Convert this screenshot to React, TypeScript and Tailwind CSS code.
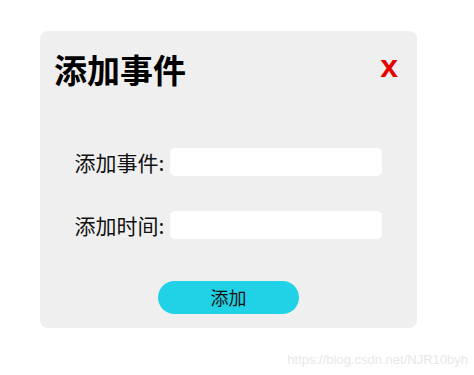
import React from "react";

const cjk = '"Noto Sans CJK SC", "Noto Sans", sans-serif';

export default function App() {
  return (
    <div className="w-[474px] h-[375px] bg-white pl-[40px] pt-[31px] overflow-hidden" style={{ fontFamily: cjk }}>
      <div className="w-[377px] h-[297px] bg-[#efefef] rounded-[8px] flex flex-col pt-[18px] pb-[14px]">
        <div className="h-[40px] flex items-center justify-between pl-[14px] pr-[19px]">
          <h2 className="text-[33px] leading-[40px] font-bold text-black">添加事件</h2>
          <span className="text-[32px] leading-[40px] font-bold text-[#e60000] -mt-[6px]" style={{ fontFamily: '"Liberation Sans", Arial, sans-serif' }}>
            x
          </span>
        </div>

        <div className="mt-[59px] flex flex-col gap-[35px] items-center">
          <div className="flex items-center h-[28px]">
            <label className="text-[21px] leading-[28px] text-[#111] mr-[6px]">添加事件:</label>
            <input className="w-[212px] h-[28px] bg-white rounded-[5px] outline-none px-2" />
          </div>
          <div className="flex items-center h-[28px]">
            <label className="text-[21px] leading-[28px] text-[#111] mr-[6px]">添加时间:</label>
            <input className="w-[212px] h-[28px] bg-white rounded-[5px] outline-none px-2" />
          </div>
        </div>

        <div className="mt-[42px] flex justify-center">
          <button className="w-[141px] h-[33px] rounded-full bg-[#21d2e6] text-[18px] leading-[33px] text-[#111]">
            添加
          </button>
        </div>
      </div>
      <div className="mt-[24px] text-right pr-[6px] text-[13px] leading-[16px] text-[#e8e8e8]" style={{ fontFamily: '"Liberation Sans", Arial, sans-serif' }}>
        https://blog.csdn.net/NJR10byh
      </div>
    </div>
  );
}
